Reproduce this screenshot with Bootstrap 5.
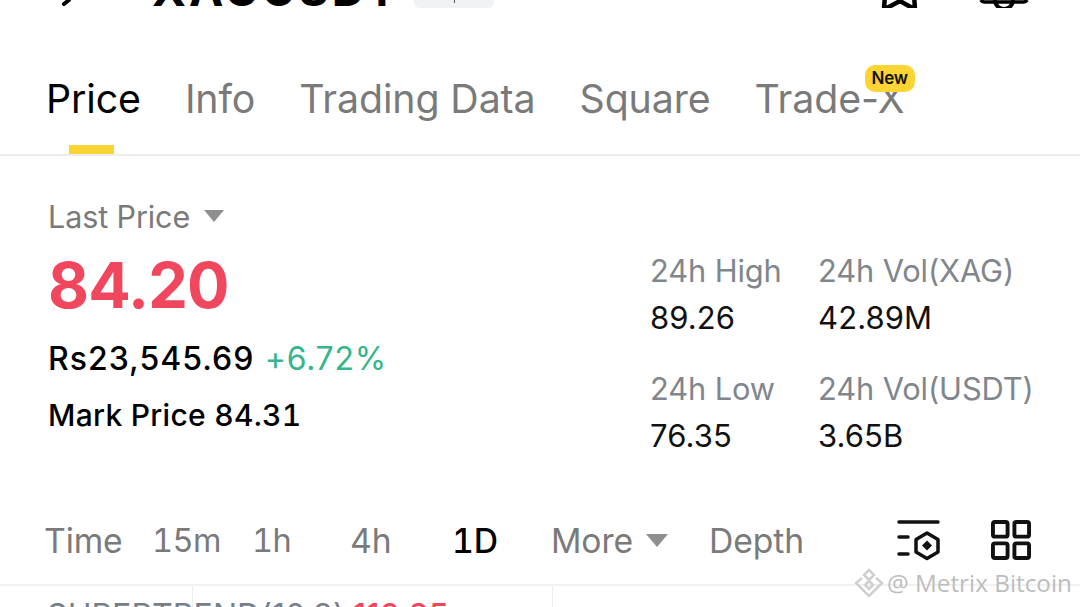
<!DOCTYPE html>
<html lang="en">
<head>
<meta charset="utf-8">
<title>XAGUSDT</title>
<link href="https://cdn.jsdelivr.net/npm/bootstrap@5.3.0/dist/css/bootstrap.min.css" rel="stylesheet">
<style>
html,body{width:1080px;height:607px;overflow:hidden;background:#fff;margin:0}
body{font-family:"Inter","Liberation Sans",sans-serif;color:#000;position:relative}
.topclip{height:8px;overflow:hidden;position:relative}
.topin{height:8px;align-items:flex-end;padding-left:55px}
.sym{font-size:46px;font-weight:700;line-height:44px;margin-left:97px;letter-spacing:3px;white-space:nowrap;flex:0 0 auto;height:44px;margin-bottom:-3px;width:246px}
.chip{width:80px;height:8px;background:#f1f2f4;border-radius:0 0 6px 6px;margin-left:16px;flex:0 0 auto;position:relative}
.chip::after{content:"";position:absolute;left:40px;top:0;height:3px;width:1px;background:#555}
.ticon{position:absolute;top:0}
.tabsrow{height:148px;border-bottom:2px solid #eceded;padding-left:46px;gap:44px;position:relative;padding-top:66px}
.tabitem{font-size:39.3px;line-height:50px;color:#7a7a7a;white-space:nowrap;position:relative;font-weight:400;letter-spacing:-.1px}
.tabitem.on{color:#000}
.tabitem.on::after{content:"";position:absolute;left:23px;width:45px;height:9px;top:71px;background:#fcd535}
.newtag{position:absolute;left:110px;top:-9px;background:#fcd535;color:#111;font-size:17px;font-weight:600;line-height:27px;height:27px;border-radius:10px;padding:0 7px;letter-spacing:-.2px}
.infozone{height:365px;padding-left:48px}
.lbl{font-size:30.5px;line-height:36px;color:#7a7a7a;letter-spacing:-.1px}
.caret{display:inline-block;width:0;height:0;border-left:10px solid transparent;border-right:10px solid transparent;border-top:12px solid #8f8f8f;margin-left:14px;vertical-align:6px}
.bigp{font-size:63px;line-height:76px;font-weight:700;color:#f0465e;letter-spacing:-.8px;margin-top:12px}
.sub1{font-size:32px;line-height:38px;font-weight:500;color:#000;letter-spacing:1px;margin-top:17px}
.up{color:#34b58b;font-weight:400;margin-left:1px;letter-spacing:.7px}
.sub2{font-size:30px;line-height:36px;font-weight:500;letter-spacing:.3px;margin-top:19px}
.sub2 span{font-feature-settings:"tnum"}
.leftcol{width:602px;flex:0 0 602px;padding-top:43px}
.statgrid{display:grid;flex:0 0 auto;grid-template-columns:168px 215px;grid-auto-rows:118px;padding-top:97px}
.statlbl{font-size:30.8px;line-height:36px;color:#80868c;white-space:nowrap;letter-spacing:-.1px}
.statval{font-size:31px;line-height:36px;color:#111;margin-top:11px;letter-spacing:.1px}
.timerow{height:63px;padding-left:44px;position:relative}
.tf{font-size:33.7px;line-height:40px;color:#7a7a7a;white-space:nowrap;letter-spacing:-.1px;font-feature-settings:"tnum"}
.tf.on{color:#000;font-weight:500}
.tf.nar{font-size:32.5px;letter-spacing:-.6px}
.w1{width:108px}.w2{width:100px}.w3{width:98px}.w4{width:102px}.w5{width:99px}.w6{width:158px}.w7{width:188px}.w8{width:94px}
.caret2{display:inline-block;width:0;height:0;border-left:11px solid transparent;border-right:11px solid transparent;border-top:13px solid #8f8f8f;margin-left:13px;vertical-align:6px}
.icohold{margin-top:-1px}
.chartzone{height:23px;border-top:2px solid #f1f1f1;position:relative;overflow:hidden}
.vline{position:absolute;top:0;bottom:0;width:1px;background:#eeeeee}
.st{font-size:32px;line-height:30px;color:#76808a;position:relative;padding-left:47px;padding-top:15px;white-space:nowrap;letter-spacing:.1px}
.st b{font-weight:500;color:#f0465e;margin-left:8px}
.wm{position:absolute;right:8px;bottom:9px;color:#bdbdbd;font-family:"Open Sans","Liberation Sans",sans-serif;font-size:24.3px;line-height:30px;gap:3px}
</style>
</head>
<body>
<div class="topclip">
  <div class="d-flex topin">
    <span class="sym">XAGUSDT</span>
    <span class="chip"></span>
  </div>
  <svg class="ticon" style="left:58px" width="18" height="8" viewBox="0 0 18 8"><path d="M6 4 L11 0" stroke="#000" stroke-width="4" stroke-linecap="round" fill="none"/></svg>
  <svg class="ticon" style="left:880px" width="40" height="12" viewBox="0 0 40 12"><path d="M5 -6 L4 9.5 L20 1 L35 9.5 L34 -6" stroke="#000" stroke-width="4.5" fill="none" stroke-linejoin="round"/></svg>
  <svg class="ticon" style="left:978px" width="54" height="12" viewBox="0 0 54 12"><path d="M3 0 Q4 2 7 2 H45 Q48 2 49 0" stroke="#000" stroke-width="3.5" fill="none"/><circle cx="26" cy="0" r="9" stroke="#000" stroke-width="4" fill="none"/></svg>
</div>

<div class="d-flex tabsrow">
  <div class="tabitem on">Price</div>
  <div class="tabitem">Info</div>
  <div class="tabitem">Trading Data</div>
  <div class="tabitem">Square</div>
  <div class="tabitem">Trade-X<span class="newtag">New</span></div>
</div>

<div class="d-flex infozone">
  <div class="leftcol">
    <div class="lbl">Last Price<span class="caret"></span></div>
    <div class="bigp">84.20</div>
    <div class="sub1">Rs23,545.69 <span class="up">+6.72%</span></div>
    <div class="sub2">Mark Price <span>84.31</span></div>
  </div>
  <div class="statgrid">
    <div><div class="statlbl">24h High</div><div class="statval">89.26</div></div>
    <div><div class="statlbl">24h Vol(XAG)</div><div class="statval">42.89M</div></div>
    <div><div class="statlbl">24h Low</div><div class="statval">76.35</div></div>
    <div><div class="statlbl">24h Vol(USDT)</div><div class="statval">3.65B</div></div>
  </div>
</div>

<div class="d-flex align-items-start timerow">
  <div class="tf w1">Time</div>
  <div class="tf nar w2">15m</div>
  <div class="tf nar w3">1h</div>
  <div class="tf w4">4h</div>
  <div class="tf on w5">1D</div>
  <div class="tf w6">More<span class="caret2"></span></div>
  <div class="tf w7">Depth</div>
  <div class="w8 icohold">
    <svg width="44" height="42" viewBox="0 0 44 42" class="d-block"><g fill="none" stroke="#111" stroke-width="3.5" stroke-linecap="round"><path d="M2 2 H41"/><path d="M2 17 H11"/><path d="M2 34 H11"/><path d="M30 13 L41 19.5 V32 L30 38.500 L19 32 V19.500 Z" stroke-linejoin="round"/></g><path d="M30 20.500 L35 25.500 L30 30.500 L25 25.500 Z" fill="#111"/></svg>
  </div>
  <div class="icohold">
    <svg width="40" height="40" viewBox="0 0 41 41" class="d-block"><g fill="none" stroke="#111" stroke-width="4"><rect x="2" y="2" width="15" height="15" rx="2"/><rect x="24" y="2" width="15" height="15" rx="2"/><rect x="2" y="24" width="15" height="15" rx="2"/><rect x="24" y="24" width="15" height="15" rx="2"/></g></svg>
  </div>
</div>

<div class="chartzone">
  <span class="vline" style="left:192px"></span>
  <span class="vline" style="left:552px"></span>
  <div class="st">SUPERTREND(10,3)<b>110.85</b></div>
</div>

<div class="d-flex align-items-center wm">
  <svg width="30" height="30" viewBox="0 0 30 30"><g fill="none" stroke="#d0d0d0" stroke-width="2.500"><path d="M15 2 L20 7 L15 12 L10 7 Z"/><path d="M8 10 L2 15 L15 28 L28 15 L22 10"/><path d="M15 13 L19 17 L15 21 L11 17 Z"/></g></svg>
  <span>@ Metrix Bitcoin</span>
</div>
</body>
</html>
